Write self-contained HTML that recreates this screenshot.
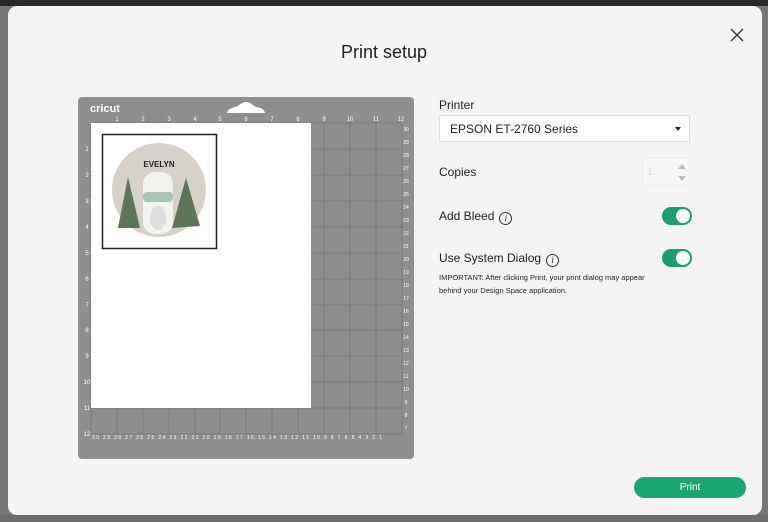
<!DOCTYPE html>
<html><head><style>
body{margin:0;width:768px;height:522px;overflow:hidden;background:#767676;font-family:"Liberation Sans",sans-serif;position:relative}
.top{position:absolute;left:0;top:0;width:768px;height:6px;background:#28282c}
.bot{position:absolute;left:0;top:515px;width:768px;height:7px;background:#6c6c6c}
.dlg{position:absolute;left:8px;top:6px;width:754px;height:509px;background:#f4f4f4;border-radius:9px}
h1{position:absolute;left:0;width:768px;top:42px;margin:0;text-align:center;font-weight:normal;font-size:18px;color:#222}
.lbl{position:absolute;left:439px;font-size:12px;color:#222}
.sel{position:absolute;left:439px;top:115px;width:251px;height:27px;background:#fff;border:1px solid #ddd;box-sizing:border-box}
.tog{position:absolute;left:662px;width:30px;height:18px;border-radius:9px;background:#1a9e6e}
.tog::after{content:"";position:absolute;right:2px;top:2px;width:14px;height:14px;border-radius:50%;background:#fff}
.i{display:inline-block;width:11px;height:11px;border:1px solid #333;border-radius:50%;font-size:9px;font-style:italic;text-align:center;line-height:11px;font-family:"Liberation Serif",serif;vertical-align:-1px;margin-left:5px}
.btn{position:absolute;left:634px;top:477px;width:112px;height:21px;border-radius:11px;background:#1aa673;color:#fff;font-size:10px;text-align:center;line-height:21px}
</style></head><body>
<div class="top"></div><div class="bot"></div>
<div class="dlg"></div>
<h1>Print setup</h1>
<svg style="position:absolute;left:729px;top:27px" width="16" height="16"><path d="M2 2L14 14M14 2L2 14" stroke="#333" stroke-width="1.4"/></svg>
<svg style="position:absolute;left:0;top:0" width="768" height="522" font-family="Liberation Sans" font-size="6" fill="#fff">
<rect x="78" y="97" width="336" height="362" rx="4" fill="#8e8e8e"/>
<path d="M227 113 Q228 108 236 107 L242 103 Q246 101 250 103 L256 107 Q264 108 265 113 Z" fill="#fff"/>
<text x="90" y="112" font-size="11" font-weight="bold" fill="#fff">cricut</text>
<g stroke="#7a7a7a" stroke-width="1">
<path d="M117 123V434M143 123V434M169 123V434M195 123V434M220 123V434M246 123V434M272 123V434M298 123V434M324 123V434M350 123V434M376 123V434M402 123V434M91 149H402M91 175H402M91 201H402M91 227H402M91 253H402M91 279H402M91 305H402M91 330H402M91 356H402M91 382H402M91 408H402M91 434H402M91 123H402M91 123V434"/>
</g>
<rect x="91" y="123" width="220" height="285" fill="#fff"/>
<g text-anchor="middle"><text x="117" y="121">1</text><text x="143" y="121">2</text><text x="169" y="121">3</text><text x="195" y="121">4</text><text x="220" y="121">5</text><text x="246" y="121">6</text><text x="272" y="121">7</text><text x="298" y="121">8</text><text x="324" y="121">9</text><text x="350" y="121">10</text><text x="376" y="121">11</text><text x="401" y="121">12</text>
<text x="87" y="151">1</text><text x="87" y="177">2</text><text x="87" y="203">3</text><text x="87" y="229">4</text><text x="87" y="255">5</text><text x="87" y="281">6</text><text x="87" y="307">7</text><text x="87" y="332">8</text><text x="87" y="358">9</text><text x="87" y="384">10</text><text x="87" y="410">11</text><text x="87" y="436">12</text>
</g>
<text x="92" y="439" font-size="5" textLength="290" lengthAdjust="spacing">30 29 28 27 26 25 24 23 22 21 20 19 18 17 16 15 14 13 12 11 10 9 8 7 6 5 4 3 2 1</text>
<g font-size="5" text-anchor="middle">
<text x="406" y="131">30</text><text x="406" y="144">29</text><text x="406" y="157">28</text><text x="406" y="170">27</text><text x="406" y="183">26</text><text x="406" y="196">25</text><text x="406" y="209">24</text><text x="406" y="222">23</text><text x="406" y="235">22</text><text x="406" y="248">21</text><text x="406" y="261">20</text><text x="406" y="274">19</text><text x="406" y="287">18</text><text x="406" y="300">17</text><text x="406" y="313">16</text><text x="406" y="326">15</text><text x="406" y="339">14</text><text x="406" y="352">13</text><text x="406" y="365">12</text><text x="406" y="378">11</text><text x="406" y="391">10</text><text x="406" y="404">9</text><text x="406" y="417">8</text><text x="406" y="430">7</text>
</g>
<rect x="102.5" y="134.5" width="114" height="114" fill="#fff" stroke="#222" stroke-width="1.5"/>
<circle cx="159" cy="190" r="47" fill="#d6d1ca"/>
<text x="159" y="167" font-size="8" font-weight="bold" fill="#222" text-anchor="middle">EVELYN</text>
<path d="M128 177 L118 228 L140 228 Z" fill="#5f7559"/>
<path d="M186 178 L172 228 L200 226 Z" fill="#5f7559"/>
<rect x="143" y="172" width="30" height="62" rx="12" fill="#f2f2ef"/>
<rect x="143" y="192" width="30" height="10" rx="4" fill="#a9c6b8"/>
<ellipse cx="158" cy="218" rx="8" ry="12" fill="#ddd"/>
</svg>
<div class="lbl" style="top:98px">Printer</div>
<div class="sel"><span style="position:absolute;left:10px;top:6px;font-size:12px;color:#222">EPSON ET-2760 Series</span><span style="position:absolute;right:8px;top:11px;border:3.5px solid transparent;border-top:4px solid #222;border-bottom:0"></span></div>
<div class="lbl" style="top:165px">Copies</div>
<div style="position:absolute;left:642px;top:158px;width:48px;height:27px;background:#f6f6f6;border:1px solid #eee;box-sizing:border-box"><span style="position:absolute;left:4px;top:7px;font-size:11px;color:#ddd">1</span><span style="position:absolute;left:35px;top:5px;border:4px solid transparent;border-bottom:5px solid #bbb;border-top:0"></span><span style="position:absolute;left:35px;top:17px;border:4px solid transparent;border-top:5px solid #bbb;border-bottom:0"></span></div>
<div class="lbl" style="top:209px">Add Bleed<span class="i">i</span></div>
<div class="tog" style="top:207px"></div>
<div class="lbl" style="top:251px">Use System Dialog<span class="i">i</span></div>
<div class="tog" style="top:249px"></div>
<div style="position:absolute;left:439px;top:271px;font-size:7.5px;line-height:13px;color:#222">IMPORTANT: After clicking Print, your print dialog may appear<br>behind your Design Space application.</div>
<div class="btn">Print</div>
</body></html>
